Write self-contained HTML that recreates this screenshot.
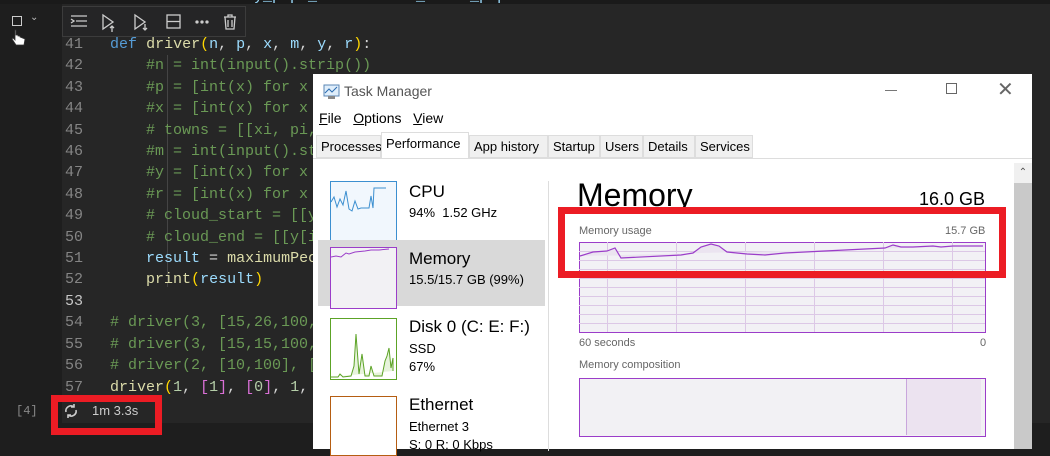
<!DOCTYPE html>
<html><head><style>
*{margin:0;padding:0;box-sizing:border-box}
body{width:1050px;height:449px;overflow:hidden;background:#1e1e1e;position:relative;font-family:"Liberation Sans",sans-serif}
.abs{position:absolute}
.code{font-family:"Liberation Mono",monospace;font-size:15px;white-space:pre;color:#d4d4d4}
.ln{color:#858585;text-align:right;width:30px}
.c{color:#6a9955}.k{color:#569cd6}.f{color:#dcdcaa}.v{color:#9cdcfe}.y{color:#ffd700}.p{color:#da70d6}.n{color:#b5cea8}
.tm{font-family:"Liberation Sans",sans-serif;color:#000}
.tab{padding:3px 4px;border:1px solid #ddd;background:#f0f0f0;height:23px;margin-top:2px}
</style></head><body>
<div class="abs" style="left:62px;top:0;width:988px;height:423px;background:#262626"></div>
<div class="abs" style="left:0;top:0;width:1050px;height:4px;background:#1a1a1a"></div>
<div class="abs" style="left:12px;top:16px;width:10px;height:10px;border:1.5px solid #ccc"></div>
<div class="abs" style="left:30px;top:12px;color:#bbb;font-size:10px">&#8964;</div>
<svg class="abs" style="left:10px;top:28px" width="18" height="20"><path d="M5 2v10l-2-2-1 1 4 6h8l1-6-5-2v-1h-2v-1h-2v-5z" fill="#fff" stroke="#333" stroke-width=".8"/></svg>
<div class="abs" style="left:62px;top:6px;width:184px;height:31px;background:#252526;border:1px solid #3c3c3c"></div>
<svg class="abs" style="left:62px;top:6px" width="184" height="31" fill="none" stroke="#ccc" stroke-width="1.3">
<path d="M9 10h16M14 15h11M9 20h16M9 13l3 2-3 2"/>
<path d="M41 9v14l10-7zM50 20v6M48 22l2-2 2 2"/>
<path d="M73 9v14l10-7zM83 18v6M81 22l2 2 2-2"/>
<rect x="105" y="9" width="13" height="13"/><path d="M105 15.5h13"/>
<circle cx="135" cy="16" r="1" fill="#ccc"/><circle cx="140" cy="16" r="1" fill="#ccc"/><circle cx="145" cy="16" r="1" fill="#ccc"/>
<path d="M162 11h12M166 11v-2h4v2M163 11l1 12h8l1-12M166 14v7M170 14v7"/>
</svg>
<div class="abs code" style="left:110px;top:-12px;color:#9cdcfe">    return sanity_popn_count + max_cloud_popn</div>
<div class="abs" style="left:167px;top:55px;width:1px;height:232px;background:#444"></div>
<div class="abs code" style="left:65px;top:34px;line-height:21.4px"><span class="ln">41</span>   <span class="k">def</span> <span class="f">driver</span><span class="y">(</span><span class="v">n</span>, <span class="v">p</span>, <span class="v">x</span>, <span class="v">m</span>, <span class="v">y</span>, <span class="v">r</span><span class="y">)</span>:
<span class="ln">42</span>       <span class="c">#n = int(input().strip())</span>
<span class="ln">43</span>       <span class="c">#p = [int(x) for x in input().split()]</span>
<span class="ln">44</span>       <span class="c">#x = [int(x) for x in input().split()]</span>
<span class="ln">45</span>       <span class="c"># towns = [[xi, pi, 'town'] for</span>
<span class="ln">46</span>       <span class="c">#m = int(input().strip())</span>
<span class="ln">47</span>       <span class="c">#y = [int(x) for x in input().split()]</span>
<span class="ln">48</span>       <span class="c">#r = [int(x) for x in input().split()]</span>
<span class="ln">49</span>       <span class="c"># cloud_start = [[y[i]-r[i]</span>
<span class="ln">50</span>       <span class="c"># cloud_end = [[y[i]+r[i]</span>
<span class="ln">51</span>       <span class="v">result</span> = <span class="f">maximumPeople</span>(p, x, y, r)
<span class="ln">52</span>       <span class="f">print</span><span class="y">(</span><span class="v">result</span><span class="y">)</span>
<span class="ln" style="color:#c6c6c6">53</span>
<span class="ln">54</span>   <span class="c"># driver(3, [15,26,100,4</span>
<span class="ln">55</span>   <span class="c"># driver(3, [15,15,100,4</span>
<span class="ln">56</span>   <span class="c"># driver(2, [10,100], [5</span>
<span class="ln">57</span>   <span class="f">driver</span><span class="y">(</span><span class="n">1</span>, <span class="p">[</span><span class="n">1</span><span class="p">]</span>, <span class="p">[</span><span class="n">0</span><span class="p">]</span>, <span class="n">1</span>, <span class="p">[</span></div>
<div class="abs" style="left:16px;top:404px;color:#888;font-family:'Liberation Mono',monospace;font-size:12px">[4]</div>
<svg class="abs" style="left:63px;top:403px" width="16" height="16" fill="none" stroke="#ccc" stroke-width="1.6"><path d="M3 9a5 5 0 0 1 8-5M13 7a5 5 0 0 1-8 5"/><path d="M11 1v3h-3M5 15v-3h3"/></svg>
<div class="abs" style="left:92px;top:403px;color:#ccc;font-size:13px">1m 3.3s</div>
<div class="abs" style="left:51px;top:395px;width:111px;height:40px;border:7px solid #ec1c24"></div>

<div class="abs tm" style="left:313px;top:74px;width:719px;height:375px;background:#fff">
 <svg class="abs" style="left:10px;top:10px" width="18" height="16"><rect x="1" y="1" width="15" height="11" fill="#dfeefb" stroke="#5b87b5"/><path d="M2 9l4-4 3 3 5-5" stroke="#2b6cb0" fill="none"/><rect x="5" y="12" width="7" height="3" fill="#888"/></svg>
 <div class="abs" style="left:31px;top:9px;font-size:14px;color:#555">Task Manager</div>
 <div class="abs" style="left:572px;top:16px;width:12px;height:1px;background:#777"></div>
 <div class="abs" style="left:633px;top:9px;width:11px;height:11px;border:1px solid #666"></div>
 <div class="abs" style="left:684px;top:3px;font-size:20px;color:#666">&#10005;</div>
 <div class="abs" style="left:6px;top:36px;font-size:14px"><u>F</u>ile&nbsp;&nbsp; <u>O</u>ptions&nbsp;&nbsp; <u>V</u>iew</div>
 <div class="abs" style="left:0;top:84px;width:719px;height:1px;background:#ddd"></div>
 <div class="abs" style="left:3px;top:59px;height:24px;display:flex;font-size:13px">
  <div class="tab" style="width:65px">Processes</div>
  <div class="tab" style="background:#fff;border-bottom:none;height:26px;margin-top:-1px;width:88px">Performance</div>
  <div class="tab" style="width:79px">App history</div>
  <div class="tab" style="width:52px">Startup</div>
  <div class="tab" style="width:43px">Users</div>
  <div class="tab" style="width:52px">Details</div>
  <div class="tab" style="width:58px">Services</div>
 </div>
 <div class="abs" style="left:17px;top:107px;width:67px;height:62px;border:1.5px solid #3c8fd0;background:#f1f7fd"></div>
 <svg class="abs" style="left:18px;top:108px" width="65" height="30"><path d="M0 20l3-5 3 10 3-8 3 6 3-14 3 18 3 2 3-10 3 8 3-1 8 0 2-12 2 12 1-20 12 0" stroke="#3c8fd0" fill="none"/></svg>
 <div class="abs" style="left:96px;top:108px;font-size:17px">CPU</div>
 <div class="abs" style="left:96px;top:131px;font-size:13px">94%&nbsp; 1.52 GHz</div>
 <div class="abs" style="left:5px;top:166px;width:227px;height:66px;background:#d9d9d9"></div>
 <div class="abs" style="left:17px;top:173px;width:67px;height:62px;border:1.5px solid #9b3dc9;background:#f2f1f4"></div>
 <svg class="abs" style="left:18px;top:174px" width="65" height="20"><path d="M0 9l5-1 5 1 5-4 3 1 6-2 10-1 6-1 8 0 10-1" stroke="#9b3dc9" fill="none"/></svg>
 <div class="abs" style="left:96px;top:175px;font-size:17px">Memory</div>
 <div class="abs" style="left:96px;top:198px;font-size:13px">15.5/15.7 GB (99%)</div>
 <div class="abs" style="left:17px;top:244px;width:67px;height:62px;border:1.5px solid #5ca326;background:#fff"></div>
 <svg class="abs" style="left:18px;top:245px" width="65" height="60"><path d="M0 58l7 0 2-3 3 3 8-1 3-10 2-32 3 40 3-20 3 22 4 0 2-10 3 10 8 0 3-15 2-5 2-8 2 20 2-10 0 13" stroke="#5ca326" fill="#e7f3dc"/></svg>
 <div class="abs" style="left:96px;top:243px;font-size:17px">Disk 0 (C: E: F:)</div>
 <div class="abs" style="left:96px;top:266px;font-size:13px;line-height:18px">SSD<br>67%</div>
 <div class="abs" style="left:17px;top:322px;width:67px;height:60px;border:1.5px solid #b55d12;background:#fff"></div>
 <div class="abs" style="left:96px;top:321px;font-size:17px">Ethernet</div>
 <div class="abs" style="left:96px;top:344px;font-size:13px;line-height:18px">Ethernet 3<br>S: 0 R: 0 Kbps</div>
 <div class="abs" style="left:235px;top:107px;width:1px;height:270px;background:#ddd"></div>
 <div class="abs" style="left:264px;top:103px;font-size:32px">Memory</div>
 <div class="abs" style="left:606px;top:115px;font-size:18px">16.0 GB</div>
 <div class="abs" style="left:266px;top:151px;font-size:11px;color:#666">Memory usage</div>
 <div class="abs" style="left:632px;top:151px;font-size:11px;color:#666">15.7 GB</div>
 <svg class="abs" style="left:266px;top:168px" width="408" height="92">
  <rect x="0.5" y="0.5" width="406" height="90" fill="#f2f1f5" stroke="#9b3dc9"/>
  <g stroke="#dcc8e6"><path d="M0 9.5h406M0 18.5h406M0 27.5h406M0 36.5h406M0 45.5h406M0 54.5h406M0 63.5h406M0 72.5h406M0 81.5h406M28.5 0v90M97.5 0v90M166.5 0v90M235.5 0v90M304.5 0v90M373.5 0v90"/></g>
  <path d="M1 14l13-4 14-1 8-3 6 10 60-3 12-2 8-6 10-3 8 2 8 6 20 2 18 1 20-2 60-3 40-2 8-3 8 2 12 0 20-1 8 1 12-1 30 0" stroke="#9b3dc9" fill="#ebe4f0" stroke-width="1.2"/>
 </svg>
 <div class="abs" style="left:266px;top:263px;font-size:11px;color:#666">60 seconds</div>
 <div class="abs" style="left:667px;top:263px;font-size:11px;color:#666">0</div>
 <div class="abs" style="left:266px;top:285px;font-size:11px;color:#666">Memory composition</div>
 <div class="abs" style="left:266px;top:304px;width:407px;height:59px;border:1.5px solid #9b3dc9;background:#f2f1f4"><div class="abs" style="left:326px;top:0;width:75px;height:56px;background:#ece3f0;border-left:1px solid #c9a6dc"></div></div>
 <div class="abs" style="left:701px;top:89px;width:18px;height:286px;background:#c9c9c9"></div>
 <div class="abs" style="left:701px;top:89px;width:18px;height:20px;background:#f0f0f0;font-size:10px;text-align:center;color:#555;padding-top:4px">&#8963;</div>
</div>
<div class="abs" style="left:558px;top:207px;width:448px;height:71px;border:7px solid #ec1c24"></div>
</body></html>
